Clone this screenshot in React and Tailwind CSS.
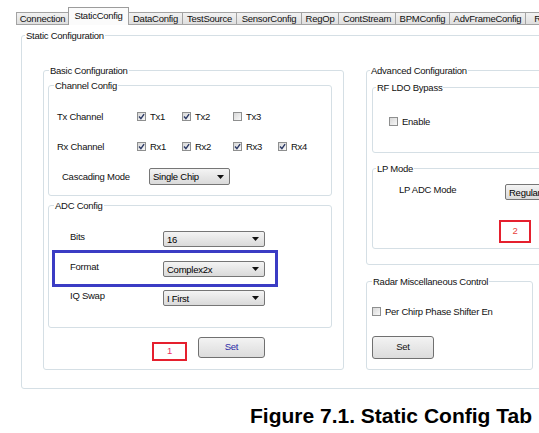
import React from "react";

function Box({ checked }) {
  return (
    <span className="flex h-[9px] w-[9px] shrink-0 items-center justify-center border border-[#8e8f8f] bg-linear-to-br from-[#d8d8d8] to-[#f8f8f8]">
      {checked && (
        <svg width="7" height="7" viewBox="0 0 7 7">
          <path d="M1 3.6 L2.9 5.6 L6.1 1.1" stroke="#2c3a66" strokeWidth="1.4" fill="none" />
        </svg>
      )}
    </span>
  );
}

function Check({ label, checked, className = "" }) {
  return (
    <div className={`flex h-[11px] items-center gap-[4px] ${className}`}>
      <Box checked={checked} />
      <span className="leading-[11px]">{label}</span>
    </div>
  );
}

function Select({ text, className = "" }) {
  return (
    <div
      className={`flex shrink-0 items-center justify-between rounded-[2px] border border-[#767676] bg-linear-to-b from-[#f4f4f4] to-[#dadada] pl-[3px] pr-[5px] ${className}`}
    >
      <span className="leading-[11px] text-black">{text}</span>
      <svg width="7" height="4" viewBox="0 0 7 4">
        <polygon points="0,0 7,0 3.5,4" fill="#111" />
      </svg>
    </div>
  );
}

function Button({ children, className = "" }) {
  return (
    <div
      className={`flex shrink-0 items-center justify-center rounded-[3px] border border-[#707070] bg-linear-to-b from-[#f3f3f3] to-[#dcdcdc] ${className}`}
    >
      {children}
    </div>
  );
}

function Group({ legend, className = "", legendClass = "", children }) {
  return (
    <fieldset className={`shrink-0 rounded-[3px] border border-[#d5dfe5] ${className}`}>
      <legend className={`px-[1px] leading-[11px] ${legendClass}`}>{legend}</legend>
      {children}
    </fieldset>
  );
}

const tabs = [
  ["Connection", "w-[53px]"],
  ["StaticConfig", "w-[61px]"],
  ["DataConfig", "w-[55px]"],
  ["TestSource", "w-[55px]"],
  ["SensorConfig", "w-[66px]"],
  ["RegOp", "w-[38px]"],
  ["ContStream", "w-[58px]"],
  ["BPMConfig", "w-[55px]"],
  ["AdvFrameConfig", "w-[77px]"],
  ["Ra", "w-[30px]"],
];

export default function App() {
  return (
    <div className="h-[433px] w-[539px] overflow-hidden bg-white font-['Liberation_Sans',Arial,sans-serif] text-[9.5px] tracking-[-0.25px] text-[#111]">
      <div className="w-[640px]">
        {/* Tabs */}
        <div className="flex h-[25px] items-end pl-[16px]">
          {tabs.map(([name, w], i) =>
            name === "StaticConfig" ? (
              <div
                key={name}
                className={`-ml-px flex h-[18px] shrink-0 justify-center border border-b-0 border-[#9c9c9c] bg-[#fbfbfb] pt-[2px] leading-[11px] ${w}`}
              >
                {name}
              </div>
            ) : (
              <div
                key={name}
                className={`flex h-[13px] shrink-0 items-center justify-center overflow-hidden border border-[#a3a3a3] bg-linear-to-b from-[#f2f2f2] to-[#dfdfdf] leading-[11px] ${
                  i === 0 ? "" : "-ml-px"
                } ${w}`}
              >
                {name}
              </div>
            )
          )}
        </div>

        {/* Static Configuration */}
        <Group
          legend="Static Configuration"
          className="ml-[21px] mt-[5px] h-[359px] w-[580px]"
          legendClass="ml-[3px]"
        >
          <div className="flex pl-[21px] pt-[24px]">
            {/* Basic Configuration */}
            <Group legend="Basic Configuration" className="h-[305px] w-[300px]" legendClass="ml-[5px]">
              <div className="flex flex-col pl-[4px] pr-[11px] pt-[4px]">
                <Group legend="Channel Config" className="h-[116px] w-[284px]" legendClass="ml-[5px]">
                  <div className="flex flex-col gap-[13px] pl-[8px] pt-[17px]">
                    <div className="flex h-[17px] items-center">
                      <span className="w-[80px] leading-[11px]">Tx Channel</span>
                      <Check label="Tx1" checked className="w-[45px]" />
                      <Check label="Tx2" checked className="w-[51px]" />
                      <Check label="Tx3" className="w-[45px]" />
                    </div>
                    <div className="flex h-[17px] items-center">
                      <span className="w-[80px] leading-[11px]">Rx Channel</span>
                      <Check label="Rx1" checked className="w-[45px]" />
                      <Check label="Rx2" checked className="w-[51px]" />
                      <Check label="Rx3" checked className="w-[45px]" />
                      <Check label="Rx4" checked />
                    </div>
                    <div className="flex h-[17px] items-center pl-[5px]">
                      <span className="w-[87px] leading-[11px]">Cascading Mode</span>
                      <Select text="Single Chip" className="h-[17px] w-[81px]" />
                    </div>
                  </div>
                </Group>

                <Group legend="ADC Config" className="mt-[4px] h-[128px] w-[284px]" legendClass="ml-[5px]">
                  <div className="flex flex-col pl-[21px] pt-[20px]">
                    <div className="flex h-[16px] items-start">
                      <span className="w-[93px] leading-[11px]">Bits</span>
                      <Select text="16" className="h-[16px] w-[102px]" />
                    </div>
                    <div className="relative mt-[14px] flex h-[16px] items-start">
                      <span className="w-[93px] leading-[11px]">Format</span>
                      <Select text="Complex2x" className="h-[16px] w-[102px]" />
                      <div className="absolute left-[-18px] top-[-11px] h-[37px] w-[226px] border-[3px] border-[#3b3cc4]" />
                    </div>
                    <div className="mt-[13px] flex h-[16px] items-start">
                      <span className="w-[93px] leading-[11px]">IQ Swap</span>
                      <Select text="I First" className="h-[16px] w-[102px]" />
                    </div>
                  </div>
                </Group>

                <div className="mt-[9px] flex items-start">
                  <div className="ml-[104px] mt-[5px] flex h-[19px] w-[35px] items-center justify-center border-2 border-[#e5202e] text-[#ec2f63]">
                    1
                  </div>
                  <Button className="ml-[11px] h-[21px] w-[67px] text-[#2a2aa6]">Set</Button>
                </div>
              </div>
            </Group>

            {/* Right column */}
            <div className="ml-[22px] flex flex-col">
              <Group legend="Advanced Configuration" className="h-[200px] w-[200px]" legendClass="ml-[3px]">
                <div className="flex flex-col pl-[5px] pt-[6px]">
                  <Group legend="RF LDO Bypass" className="h-[71px] w-[190px]" legendClass="ml-[3px]">
                    <div className="pl-[16px] pt-[23px]">
                      <Check label="Enable" />
                    </div>
                  </Group>
                  <Group legend="LP Mode" className="mt-[10px] h-[86px] w-[190px]" legendClass="ml-[3px]">
                    <div className="flex flex-col pl-[26px] pt-[10px]">
                      <div className="flex h-[16px] items-start">
                        <span className="w-[106px] shrink-0 leading-[11px]">LP ADC Mode</span>
                        <Select text="Regular" className="h-[16px] w-[60px]" />
                      </div>
                    </div>
                    <div className="ml-[126px] mt-[20px] flex h-[23px] w-[32px] items-center justify-center border-2 border-[#e5202e] text-[#e8413c]">
                      2
                    </div>
                  </Group>
                </div>
              </Group>

              <Group legend="Radar Miscellaneous Control" className="mt-[11px] h-[94px] w-[167px]" legendClass="ml-[5px]">
                <div className="flex flex-col pl-[5px] pt-[19px]">
                  <Check label="Per Chirp Phase Shifter En" />
                  <Button className="mt-[19px] h-[23px] w-[62px]">Set</Button>
                </div>
              </Group>
            </div>
          </div>
        </Group>

        {/* Caption */}
        <div className="ml-[250px] mt-[16px] whitespace-nowrap text-[21px] font-bold leading-[21px] tracking-normal text-black">
          Figure 7.1. Static Config Tab
        </div>
      </div>
    </div>
  );
}
